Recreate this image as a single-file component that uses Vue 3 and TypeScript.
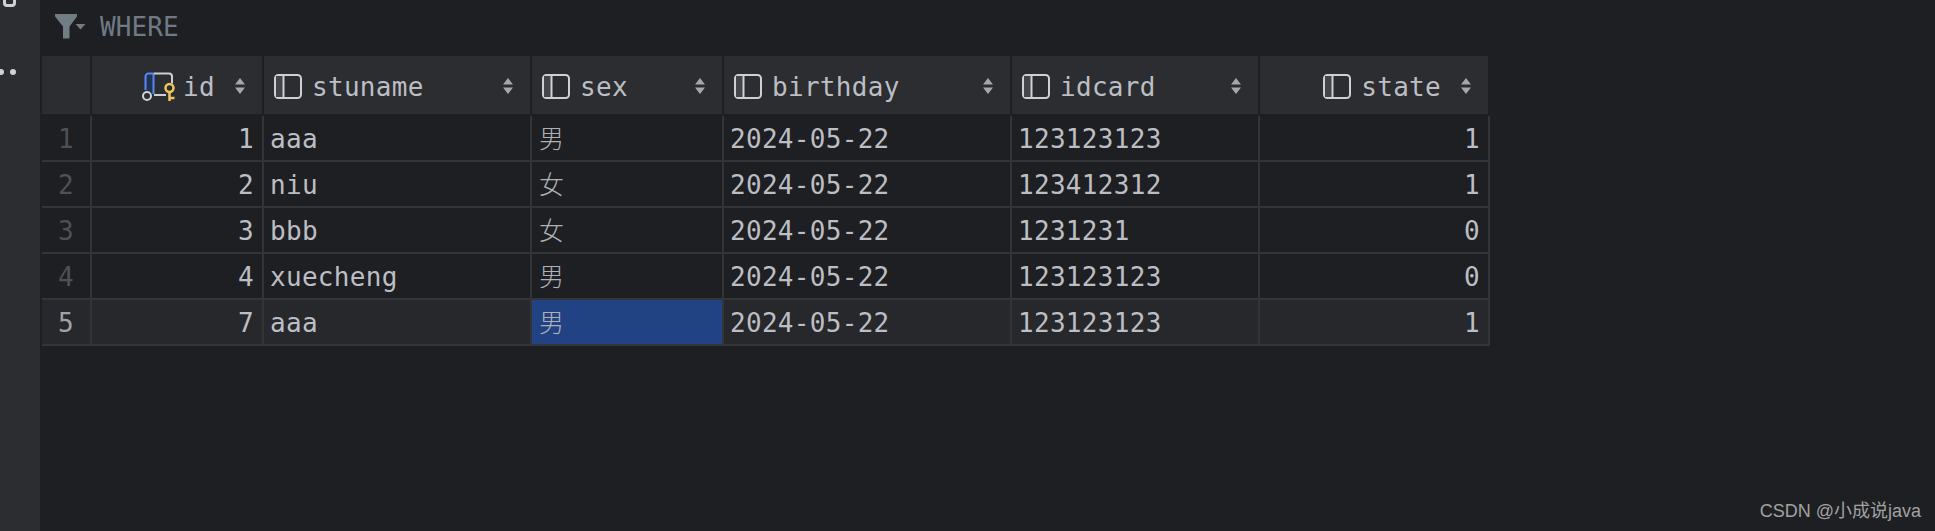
<script setup lang="ts">
interface Column {
  name: string
  right?: boolean
  key?: boolean
}
const columns: Column[] = [
  { name: 'id', right: true, key: true },
  { name: 'stuname' },
  { name: 'sex' },
  { name: 'birthday' },
  { name: 'idcard' },
  { name: 'state', right: true },
]
const rows: string[][] = [
  ['1', 'aaa', '男', '2024-05-22', '123123123', '1'],
  ['2', 'niu', '女', '2024-05-22', '123412312', '1'],
  ['3', 'bbb', '女', '2024-05-22', '1231231', '0'],
  ['4', 'xuecheng', '男', '2024-05-22', '123123123', '0'],
  ['7', 'aaa', '男', '2024-05-22', '123123123', '1'],
]
const lastRow = rows.length - 1
const selectedCol = 2
</script>

<template>
  <div class="page">
    <aside class="strip">
      <span class="strip-square"></span>
      <span class="strip-dots"><i></i><i></i></span>
    </aside>
    <main class="main">
      <div class="where">
        <svg class="funnel" width="31" height="25" viewBox="0 0 31 25">
          <path d="M0 0h22v2.500L14.500 12.500V24.500H8V12.500L0 2.500z" fill="#727d83" />
          <path d="M20.500 10h10l-5 5.500z" fill="#727d83" />
        </svg>
        <span class="where-label">WHERE</span>
      </div>
      <div class="table">
        <div class="head grid">
          <div class="head-cell corner"></div>
          <div v-for="c in columns" :key="c.name" class="head-cell" :class="{ right: c.right }">
            <svg v-if="c.key" class="col-icon key-icon" width="34" height="30" viewBox="0 0 34 30">
              <rect x="4" y="1" width="8" height="21" fill="#233250" />
              <path d="M12 1.500H6.500a3 3 0 0 0-3 3V18" fill="none" stroke="#548af7" stroke-width="2" />
              <path d="M11.500 1v21" stroke="#548af7" stroke-width="2" />
              <path d="M12 1.500h15a3 3 0 0 1 3 3v7M12 23h12" fill="none" stroke="#ced0d6" stroke-width="2" />
              <circle cx="5" cy="24" r="4" fill="#2b2d30" stroke="#ced0d6" stroke-width="2" />
              <circle cx="27.500" cy="16" r="4" fill="none" stroke="#f2c55c" stroke-width="2.500" />
              <path d="M27.500 20v9M27.500 26h5" fill="none" stroke="#f2c55c" stroke-width="2.500" />
            </svg>
            <svg v-else class="col-icon" width="28" height="25" viewBox="0 0 28 25">
              <rect x="1" y="1" width="26" height="23" rx="3.500" fill="none" stroke="#ced0d6" stroke-width="2" />
              <rect x="2" y="2" width="7" height="21" fill="#43454a" />
              <path d="M9.500 1v23" stroke="#ced0d6" stroke-width="2" />
            </svg>
            <span class="head-name">{{ c.name }}</span>
            <svg class="sort" width="10" height="16" viewBox="0 0 10 16">
              <path d="M5 0l5 6.500H0zM0 9.500h10L5 16z" fill="#a4a7ae" />
            </svg>
          </div>
        </div>
        <div v-for="(row, r) in rows" :key="r" class="row grid" :class="{ current: r === lastRow }">
          <div class="cell num">{{ r + 1 }}</div>
          <div
            v-for="(val, c) in row"
            :key="c"
            class="cell"
            :class="{ right: columns[c].right, selected: r === lastRow && c === selectedCol, cjk: c === selectedCol }"
          >{{ val }}</div>
        </div>
      </div>
    </main>
    <div class="watermark">CSDN @小成说java</div>
  </div>
</template>

<style>
html,
body {
  margin: 0;
  background: #1e1f22;
}
</style>

<style scoped>
.page {
  position: relative;
  display: flex;
  width: 1935px;
  height: 531px;
  overflow: hidden;
  background: #1e1f22;
  font-family: "DejaVu Sans Mono", "Liberation Mono", "Noto Sans CJK SC", monospace;
  color: #bcbec4;
}
.strip {
  position: relative;
  flex: 0 0 40px;
  background: #2b2d30;
}
.strip-square {
  position: absolute;
  left: 3px;
  top: -17px;
  width: 7px;
  height: 18px;
  border: 3px solid #ced0d6;
  border-radius: 4px;
}
.strip-dots {
  position: absolute;
  left: -2px;
  top: 69px;
  display: flex;
  gap: 6px;
}
.strip-dots i {
  display: block;
  width: 6px;
  height: 6px;
  border-radius: 50%;
  background: #ced0d6;
}
.main {
  flex: 1;
  padding-left: 2px;
}
.where {
  display: flex;
  align-items: flex-start;
  height: 56px;
  padding: 14px 0 0 13px;
  box-sizing: border-box;
}
.funnel {
  flex: none;
}
.where-label {
  margin-left: 14px;
  font-size: 26px;
  line-height: 26px;
  color: #6f7a85;
  letter-spacing: 0.1px;
}
.table {
  width: 1448px;
}
.grid {
  display: grid;
  grid-template-columns: 50px 172px 268px 192px 288px 248px 230px;
  letter-spacing: 0.3px;
}
.head {
  height: 60px;
}
.head-cell {
  display: flex;
  align-items: center;
  box-sizing: border-box;
  height: 58px;
  padding: 2px 17px 0 10px;
  background: #2b2d30;
  border-right: 2px solid #1e1f22;
  font-size: 26px;
}
.head-cell:last-child {
  border-right: 0;
  margin-right: 2px;
}
.head-cell.right {
  justify-content: flex-end;
}
.col-icon {
  flex: none;
  margin-right: 10px;
}
.key-icon {
  margin-top: 2px;
  margin-right: 7px;
}
.head-name {
  margin-top: 2px;
  white-space: nowrap;
}
.sort {
  flex: none;
  margin-left: auto;
}
.head-cell.right .sort {
  margin-left: 20px;
}
.row {
  height: 46px;
  box-sizing: border-box;
  border-bottom: 2px solid #323438;
}
.row.current {
  background: #26282c;
}
.cell {
  box-sizing: border-box;
  padding: 2px 8px 0 6px;
  border-right: 2px solid #323438;
  font-size: 26px;
  line-height: 42px;
  white-space: nowrap;
}
.cell.right {
  text-align: right;
}
.cell.num {
  color: #4e5157;
  text-align: center;
  padding: 2px 0 0;
}
.current .cell.num {
  color: #a0a2a8;
}
.cell.cjk {
  font-family: "Noto Sans CJK SC", sans-serif;
  font-size: 25px;
  font-weight: 300;
  color: #aeb0b6;
  padding-top: 0;
  padding-left: 7px;
}
.cell.selected {
  background: #214283;
}
.watermark {
  position: absolute;
  right: 14px;
  bottom: 9px;
  font-family: "Liberation Sans", "Noto Sans CJK SC", sans-serif;
  font-size: 18px;
  line-height: 22px;
  color: #a2a2a2;
}
</style>
